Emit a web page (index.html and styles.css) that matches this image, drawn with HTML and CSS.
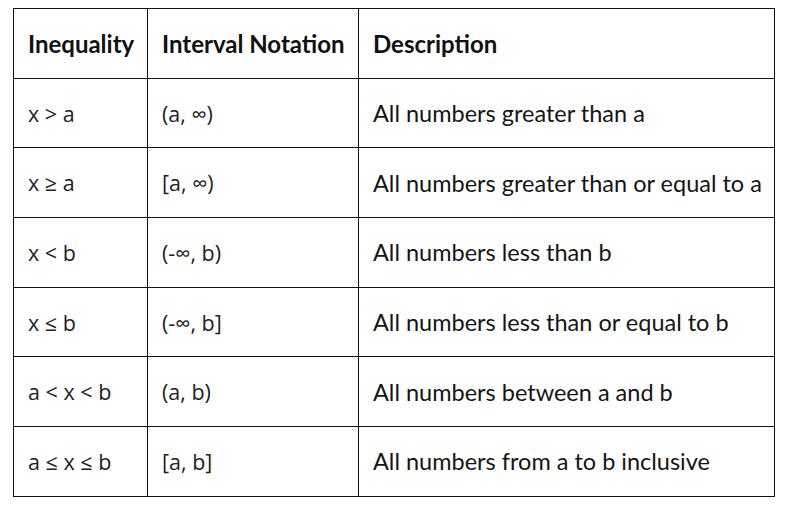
FILE: index.html
```html
<!DOCTYPE html>
<html>
<head>
<meta charset="utf-8">
<link rel="stylesheet" href="styles.css">
</head>
<body>
<table class="grid">
  <colgroup>
    <col class="c1"><col class="c2"><col class="c3">
  </colgroup>
  <thead>
    <tr><th>Inequality</th><th>Interval Notation</th><th>Description</th></tr>
  </thead>
  <tbody>
    <tr><td class="m">x &gt; a</td><td class="m">(a, ∞)</td><td>All numbers greater than a</td></tr>
    <tr><td class="m">x ≥ a</td><td class="m">[a, ∞)</td><td>All numbers greater than or equal to a</td></tr>
    <tr><td class="m">x &lt; b</td><td class="m">(-∞, b)</td><td>All numbers less than b</td></tr>
    <tr><td class="m">x ≤ b</td><td class="m">(-∞, b]</td><td>All numbers less than or equal to b</td></tr>
    <tr><td class="m">a &lt; x &lt; b</td><td class="m">(a, b)</td><td>All numbers between a and b</td></tr>
    <tr><td class="m">a ≤ x ≤ b</td><td class="m">[a, b]</td><td>All numbers from a to b inclusive</td></tr>
  </tbody>
</table>
</body>
</html>
```

FILE: styles.css
```css
html, body {
  margin: 0;
  background: #ffffff;
}
body {
  padding: 8px 0 0 13px;
  font-family: Lato, "Noto Sans", sans-serif;
  color: #151515;
}
.grid {
  border-collapse: collapse;
  table-layout: fixed;
  width: 761px;
}
.c1 { width: 134px; }
.c2 { width: 211px; }
.c3 { width: 416px; }
.grid th, .grid td {
  border: 1px solid #111;
  padding: 0 0 0 14px;
  height: 69.7px;
  text-align: left;
  vertical-align: middle;
  font-size: 23.5px;
  white-space: nowrap;
  box-sizing: border-box;
}
.grid th {
  font-weight: 700;
  font-size: 24px;
  color: #111;
}
.grid td {
  font-weight: 400;
}
.grid td.m {
  font-family: "Open Sans", Lato, sans-serif;
  font-size: 21.5px;
  color: #222;
}
```
